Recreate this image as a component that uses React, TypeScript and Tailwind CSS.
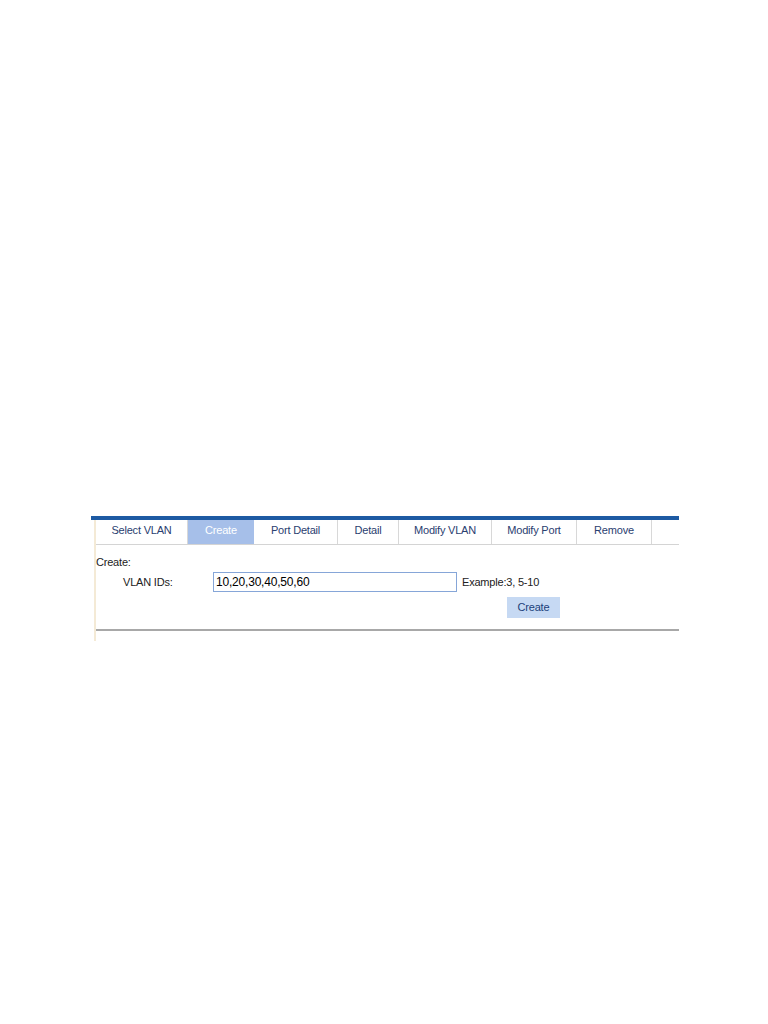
const tabs = [
  { label: "Select VLAN", w: "w-[92px]" },
  { label: "Create", w: "w-[66px]", active: true },
  { label: "Port Detail", w: "w-[84px]" },
  { label: "Detail", w: "w-[61px]" },
  { label: "Modify VLAN", w: "w-[93px]" },
  { label: "Modify Port", w: "w-[85px]" },
  { label: "Remove", w: "w-[75px]" },
];

export default function App() {
  return (
    <div className="min-h-[1024px] bg-white pt-[516px] pl-[91px] font-['Liberation_Sans',Arial,sans-serif] text-[11px] tracking-[-0.2px] text-[#333]">
      <div className="w-[588px]">
        <div className="h-[4px] bg-[#1d5aa3]" />
        <div className="ml-[3px] border-l-[2px] border-[#f4ead6] pb-[10px]">
          {/* tabs */}
          <div className="flex h-[25px] border-b border-[#d4d4d4]">
            {tabs.map((t) => (
              <div
                key={t.label}
                className={
                  t.active
                    ? `${t.w} flex justify-center bg-[#a6bfe9] pt-[2px] text-white`
                    : `${t.w} flex justify-center border-r border-[#d8d8d8] pt-[2px] text-[#2a4070]`
                }
              >
                {t.label}
              </div>
            ))}
          </div>

          {/* form */}
          <div className="pt-[11px]">
            <div className="leading-[13px] text-[#222]">Create:</div>
            <div className="mt-[3px] flex h-[20px] items-center">
              <div className="w-[117px] pl-[27px] text-[#222]">VLAN IDs:</div>
              <input
                defaultValue="10,20,30,40,50,60"
                className="h-[20px] w-[244px] border border-[#86a6d8] px-[2px] text-[12px] text-black outline-none"
              />
              <div className="pl-[5px] text-[#222]">Example:3, 5-10</div>
            </div>
            <div className="mt-[5px] flex pl-[411px]">
              <button className="h-[21px] w-[53px] bg-[#c6d9f3] text-[#1c3f7a]">Create</button>
            </div>
            <div className="mt-[11px] h-[2px] bg-[#a8a8a8]" />
          </div>
        </div>
      </div>
    </div>
  );
}
